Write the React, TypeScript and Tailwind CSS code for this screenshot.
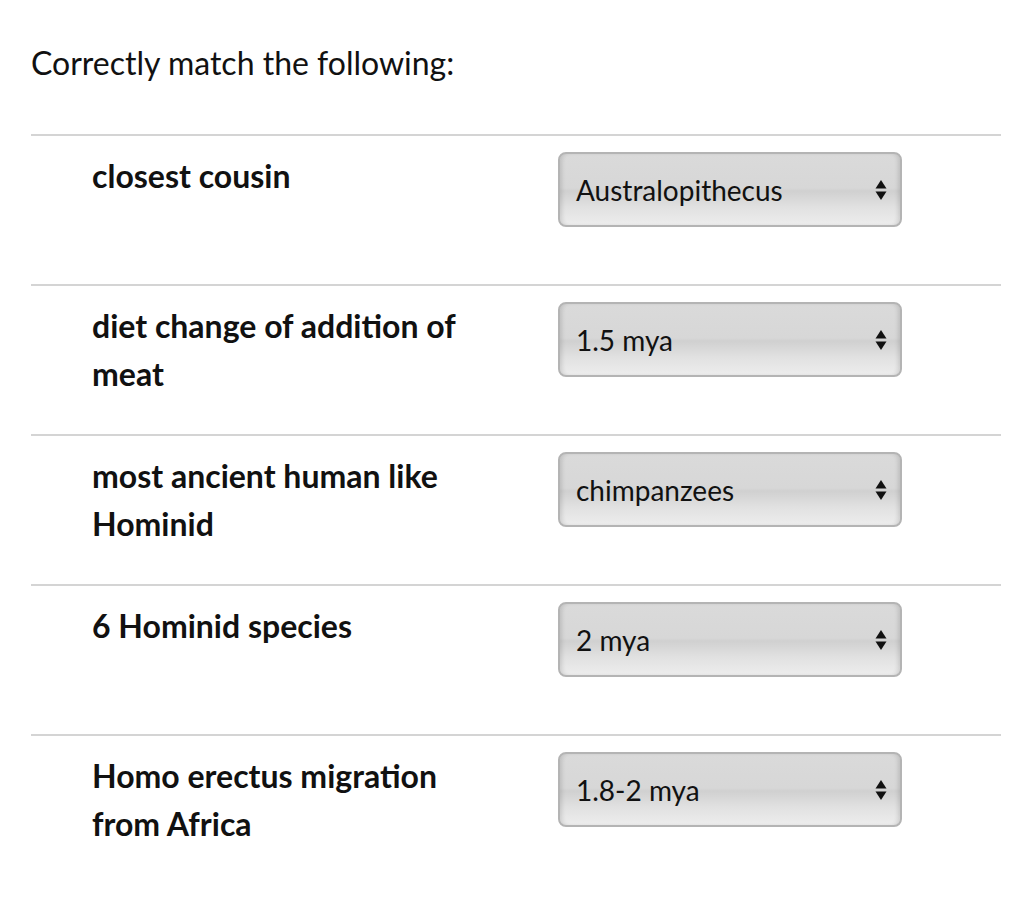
const rows = [
  { label: 'closest cousin', value: 'Australopithecus' },
  { label: 'diet change of addition of meat', value: '1.5 mya' },
  { label: 'most ancient human like Hominid', value: 'chimpanzees' },
  { label: '6 Hominid species', value: '2 mya' },
  { label: 'Homo erectus migration from Africa', value: '1.8-2 mya' },
];

function Arrows() {
  return (
    <svg width="12" height="22" viewBox="0 0 12 22" className="shrink-0">
      <path d="M6 1 L11.5 9.5 L0.5 9.5 Z" fill="#111" />
      <path d="M0.5 12.5 L11.5 12.5 L6 21 Z" fill="#111" />
    </svg>
  );
}

function FakeSelect({ value }: { value: string }) {
  return (
    <div className="relative w-[344px] h-[75px] rounded-[8px] border-2 border-[#b4b4b4] overflow-hidden bg-[linear-gradient(to_bottom,#dadada_0%,#d7d7d7_48%,#d0d0d0_52%,#e1e1e1_75%,#ededed_100%)] shadow-[inset_4px_0_4px_-2px_rgba(0,0,0,0.12),inset_-4px_0_4px_-2px_rgba(0,0,0,0.12)] flex items-center justify-between pl-[16px] pr-[13px]">
      <span className="text-[28px] text-[#111] leading-none">{value}</span>
      <Arrows />
    </div>
  );
}

export default function App() {
  return (
    <div className="min-h-[914px] bg-white font-['Lato',sans-serif] text-[#111] pl-[31px] pr-[11px]">
      <h1 className="pt-[42px] pb-[50px] text-[32px] leading-[42px] font-normal">
        Correctly match the following:
      </h1>
      <div>
        {rows.map((r) => (
          <div key={r.label} className="h-[150px] border-t-2 border-[#d4d4d4] flex">
            <div className="w-[527px] pl-[61px] pt-[16px]">
              <div className="w-[420px] text-[32px] leading-[48px] font-bold">{r.label}</div>
            </div>
            <div className="pt-[16px]">
              <FakeSelect value={r.value} />
            </div>
          </div>
        ))}
      </div>
    </div>
  );
}
